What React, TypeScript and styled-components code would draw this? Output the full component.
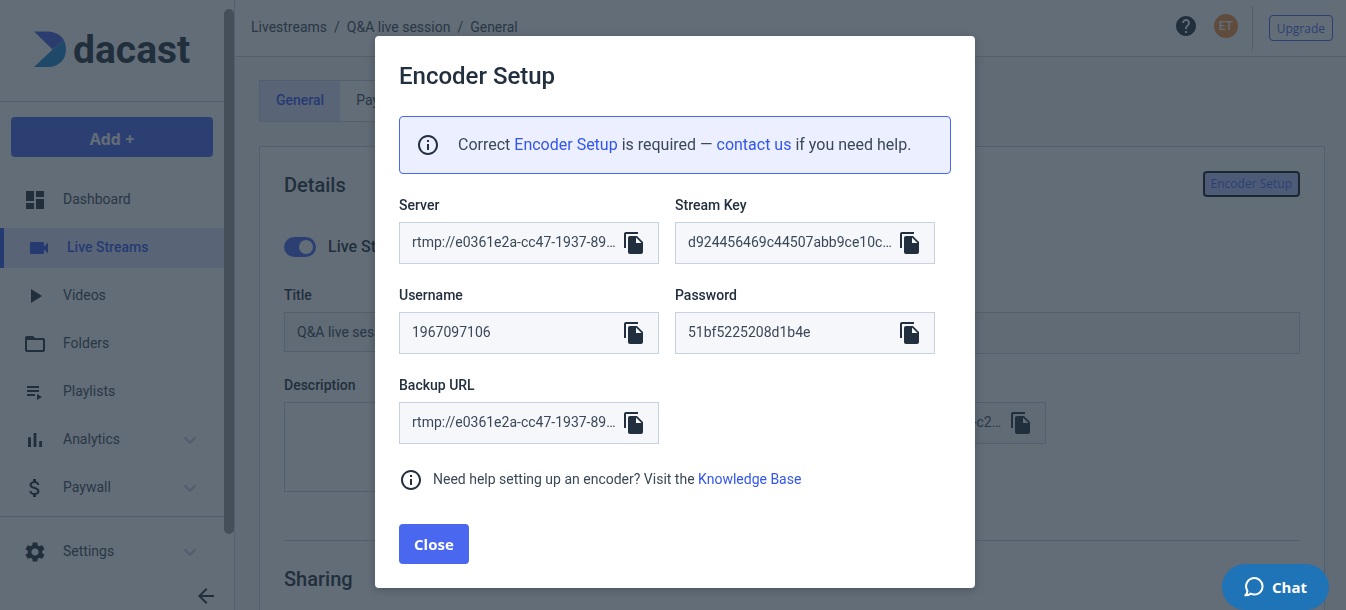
import React from 'react';
import styled, { createGlobalStyle, css } from 'styled-components';
import {
  MdArrowBack,
  MdAttachMoney,
  MdDashboard,
  MdFileCopy,
  MdHelp,
  MdInfoOutline,
  MdPlayArrow,
  MdSettings,
  MdVideocam,
} from 'react-icons/md';

const color = {
  ink: '#222f3e',
  text: '#3b4857',
  blue: '#4967ef',
  link: '#3355ee',
  border: '#c8d1e0',
  surface: '#f5f7fa',
  tint: '#dde3ff',
};

const ui = "'Open Sans', 'Noto Sans', sans-serif";

const GlobalStyle = createGlobalStyle`
  *, *::before, *::after { box-sizing: border-box; }
  body {
    margin: 0;
    color: ${color.text};
    background: ${color.surface};
    font: 400 14px/20px Roboto, sans-serif;
  }
  button, input, textarea { font: inherit; color: inherit; }
  button { cursor: pointer; }
  h1, h2, p, ul, ol { margin: 0; padding: 0; }
  ul, ol { list-style: none; }
  a { color: ${color.link}; text-decoration: none; }
  svg { display: block; flex: none; }
`;

const Page = styled.div`
  display: flex;
  height: 100vh;
  overflow: hidden;
`;

/* Sidebar */

const Sidebar = styled.aside`
  display: flex;
  flex: none;
  width: 235px;
  background: #fff;
  border-right: 1px solid ${color.border};
`;

const SidebarBody = styled.div`
  display: flex;
  flex: 1;
  flex-direction: column;
`;

const ScrollTrack = styled.div`
  width: 10px;
  padding-top: 9px;
`;

const ScrollThumb = styled.div`
  height: 525px;
  border-radius: 5px;
  background: #999;
`;

const Brand = styled.a`
  display: flex;
  align-items: center;
  gap: 7px;
  height: 102px;
  padding: 0 0 2px 34px;
  border-bottom: 1px solid ${color.border};
`;

const BrandName = styled.span`
  color: ${color.ink};
  font: 700 39px/40px Roboto, sans-serif;
`;

const AddButton = styled.button`
  height: 40px;
  margin: 15px 11px 23px;
  padding: 3px 0 0;
  border: 0;
  border-radius: 4px;
  background: ${color.blue};
  color: #fff;
  font: 700 16px/24px ${ui};
`;

const NavList = styled.ul`
  display: flex;
  flex-direction: column;
  gap: 8px;
`;

const NavLink = styled.a<{ $active?: boolean }>`
  display: flex;
  align-items: center;
  gap: 16px;
  height: 40px;
  padding: 0 22px 0 23px;
  color: ${color.text};

  span {
    flex: 1;
    padding-bottom: 2px;
  }
  svg {
    color: ${color.ink};
  }
  svg:last-child:not(:first-child) {
    color: ${color.border};
  }
  ${(p) =>
    p.$active &&
    css`
      border-left: 4px solid ${color.link};
      background: ${color.tint};
      &,
      svg {
        color: ${color.link};
      }
      span {
        font-weight: 500;
      }
    `}
`;

const NavDivider = styled.hr`
  width: 100%;
  margin: 8px 0 15px;
  border: 0;
  border-top: 1px solid ${color.border};
`;

const CollapseButton = styled.button`
  align-self: flex-end;
  margin: 12px 6px 0;
  padding: 0;
  border: 0;
  background: none;
  color: ${color.ink};
`;

/* Main column */

const Main = styled.main`
  display: flex;
  flex: 1;
  flex-direction: column;
  min-width: 0;
`;

const TopBar = styled.header`
  display: flex;
  flex: none;
  align-items: center;
  justify-content: space-between;
  height: 57px;
  padding: 0 13px 0 16px;
  background: #fff;
  border-bottom: 1px solid ${color.border};
`;

const Crumbs = styled.ol`
  display: flex;
  padding-bottom: 2px;

  li + li::before {
    content: '/';
    padding: 0 7px;
  }
  a {
    color: inherit;
  }
`;

const Account = styled.div`
  display: flex;
  align-items: center;
  gap: 14px;
`;

const AccountIcons = styled.div`
  display: flex;
  align-items: center;
  gap: 16px;
  padding-bottom: 4px;
`;

const IconButton = styled.button`
  display: flex;
  padding: 0;
  border: 0;
  background: none;
  color: ${color.ink};
`;

const Avatar = styled.button`
  width: 24px;
  height: 24px;
  padding: 0;
  border: 0;
  border-radius: 50%;
  background: #f0913a;
  color: #fff;
  font: 500 12px/24px Roboto, sans-serif;
`;

const AccountAction = styled.div`
  display: flex;
  align-items: center;
  height: 45px;
  padding-left: 16px;
  border-left: 1px solid ${color.border};
`;

const SmallButton = styled.button<{ $focused?: boolean }>`
  height: 26px;
  padding: 1px 7px 0;
  border: 1px solid ${color.blue};
  border-radius: 4px;
  background: #fff;
  color: ${color.blue};
  font: 400 12px/22px ${ui};
  ${(p) =>
    p.$focused &&
    css`
      padding: 0 6px;
      border: 2px solid #101820;
      background: #b6c2ff;
    `}
`;

const Content = styled.div`
  display: flex;
  flex: 1;
  flex-direction: column;
  gap: 24px;
  padding: 23px 21px 0 24px;
`;

const Tabs = styled.nav`
  display: flex;
  align-self: flex-start;
  border: 1px solid ${color.border};
  background: #fff;
`;

const Tab = styled.a<{ $active?: boolean }>`
  padding: 9px 16px 11px;
  color: ${(p) => (p.$active ? color.link : color.text)};
  background: ${(p) => (p.$active ? color.tint : 'transparent')};
  font-weight: ${(p) => (p.$active ? 500 : 400)};
`;

const Panel = styled.section`
  flex: 1;
  padding: 24px 24px 0;
  border: 1px solid ${color.border};
  border-bottom: 0;
  background: #fff;
`;

const PanelHead = styled.div`
  display: flex;
  align-items: flex-start;
  justify-content: space-between;
`;

const SectionTitle = styled.h2`
  color: ${color.ink};
  font-size: 20px;
  font-weight: 500;
  line-height: 28px;
`;

const SwitchLabel = styled.label`
  display: flex;
  align-items: center;
  gap: 12px;
  height: 20px;
  margin: 38px 0 28px;
  color: ${color.ink};
  font-size: 16px;
  font-weight: 500;
`;

const Switch = styled.input`
  display: flex;
  appearance: none;
  width: 32px;
  height: 20px;
  margin: 0;
  padding: 3px;
  border-radius: 10px;
  background: ${color.blue};

  &::after {
    content: '';
    width: 14px;
    height: 14px;
    margin-left: auto;
    border-radius: 50%;
    background: #fff;
  }
`;

const FormGrid = styled.div`
  display: grid;
  grid-template-columns: 1fr 1fr;
  gap: 21px 24px;
  align-items: start;
`;

const HalfGrid = styled.div`
  display: grid;
  grid-template-columns: 1fr 1fr;
  gap: 12px;
`;

const FieldGroup = styled.div`
  display: flex;
  flex-direction: column;
  gap: 7px;
`;

const FieldLabel = styled.label`
  color: ${color.ink};
  font-weight: 500;
  line-height: 20px;
`;

const TextInput = styled.input`
  width: 100%;
  height: 40px;
  padding: 0 12px;
  border: 1px solid ${color.border};
  border-radius: 0;
  background: ${color.surface};
`;

const FolderInput = styled(TextInput)`
  height: 42px;
`;

const TextArea = styled.textarea`
  height: 90px;
  padding: 8px 12px;
  border: 1px solid ${color.border};
  background: #fff;
  resize: none;
`;

const SectionDivider = styled.hr`
  margin: 48px 0 24px;
  border: 0;
  border-top: 1px solid ${color.border};
`;

const CopyBox = styled.div`
  display: flex;
  align-items: center;
  height: 42px;
  padding: 0 12px;
  border: 1px solid ${color.border};
  background: ${color.surface};
`;

const CopyValue = styled.input`
  flex: 1;
  min-width: 0;
  padding: 0 0 2px;
  border: 0;
  background: none;
  outline: 0;
  text-overflow: ellipsis;
`;

/* Dialog */

const Backdrop = styled.div`
  position: fixed;
  inset: 0;
  display: flex;
  align-items: flex-start;
  justify-content: center;
  padding: 36px 0 0 4px;
  background: rgba(33, 47, 61, 0.7);
`;

const Dialog = styled.div`
  width: 600px;
  max-width: 100%;
  padding: 24px;
  border-radius: 4px;
  background: #fff;
  box-shadow: 0 2px 8px rgba(20, 30, 45, 0.3);
`;

const DialogTitle = styled.h1`
  margin-bottom: 24px;
  color: ${color.ink};
  font-size: 24px;
  font-weight: 500;
  line-height: 32px;
`;

const Notice = styled.div`
  display: flex;
  align-items: center;
  gap: 18px;
  height: 58px;
  padding: 0 16px;
  border: 1px solid ${color.blue};
  border-radius: 4px;
  background: #ebefff;
  font-size: 16px;

  svg {
    color: ${color.ink};
  }
`;

const DialogFields = styled.div`
  display: grid;
  grid-template-columns: 1fr 1fr;
  gap: 21px 16px;
  margin: 21px 16px 24px 0;
`;

const Help = styled.div`
  display: flex;
  align-items: center;
  gap: 10px;

  svg {
    color: ${color.ink};
  }
  p {
    padding-bottom: 2px;
  }
`;

const CloseButton = styled.button`
  height: 40px;
  margin-top: 32px;
  padding: 0 15px;
  border: 0;
  border-radius: 4px;
  background: ${color.blue};
  color: #fff;
  font: 700 15px/24px ${ui};
`;

const ChatButton = styled.button`
  position: fixed;
  right: 17px;
  bottom: 0;
  display: flex;
  align-items: center;
  gap: 8px;
  height: 46px;
  padding: 0 22px;
  border: 0;
  border-radius: 23px;
  background: #1f73b7;
  color: #fff;
  font: 700 15px/20px ${ui};
`;

const BrandMark = () => (
  <svg width="32" height="37" viewBox="0 0 32 37" aria-hidden="true">
    <path d="M0 .5H14C21 .5 27 4 30 9.500L18.500 18.500Z" fill="#4560e0" />
    <path d="M0 36L18.500 18.500L30 9.500C31.300 12 32 15 32 18.500C32 28.500 25 36 14 36Z" fill="#1f88d0" />
  </svg>
);

const PlaylistIcon = () => (
  <svg width="24" height="24" viewBox="0 0 24 24" fill="currentColor" aria-hidden="true">
    <path d="M4 10h12v2H4zM4 6h12v2H4zM4 14h8v2H4zM14 14v6l5-3z" />
  </svg>
);

const BarsIcon = () => (
  <svg width="24" height="24" viewBox="0 0 24 24" fill="currentColor" aria-hidden="true">
    <path d="M5 9.200h3V19H5zM10.600 5h2.800v14h-2.800zM16.200 13H19v6h-2.800z" />
  </svg>
);

const FolderIcon = () => (
  <svg width="24" height="24" viewBox="0 0 24 24" fill="currentColor" aria-hidden="true">
    <path d="M20 6h-8l-2-2H4c-1.100 0-2 .9-2 2v12c0 1.100.9 2 2 2h16c1.100 0 2-.9 2-2V8c0-1.100-.9-2-2-2zm0 12H4V8h16v10z" />
  </svg>
);

const ChevronIcon = () => (
  <svg width="24" height="24" viewBox="0 0 24 24" fill="none" stroke="currentColor" strokeWidth="2.500" strokeLinecap="round" aria-hidden="true">
    <path d="M7.200 10L12 14.800L16.800 10" />
  </svg>
);

const ChatIcon = () => (
  <svg width="20" height="20" viewBox="0 0 20 20" fill="none" stroke="#fff" strokeWidth="2" strokeLinejoin="round" aria-hidden="true">
    <path d="M3.400 13.700A8.200 8.200 0 1 1 6.600 16.600C5 17.900 3.200 18.500 1.300 18.300C2.800 17.200 3.500 15.700 3.400 13.700Z" />
  </svg>
);

type NavItemProps = { icon: React.ReactNode; label: string; active?: boolean; expandable?: boolean };

const NavItem = ({ icon, label, active, expandable }: NavItemProps) => (
  <li>
    <NavLink href="#" $active={active} aria-current={active ? 'page' : undefined}>
      {icon}
      <span>{label}</span>
      {expandable && <ChevronIcon />}
    </NavLink>
  </li>
);

const CopyField = ({ id, label, value }: { id: string; label: string; value: string }) => (
  <FieldGroup>
    <FieldLabel htmlFor={id}>{label}</FieldLabel>
    <CopyBox>
      <CopyValue id={id} value={value} readOnly />
      <IconButton type="button" aria-label={`Copy ${label}`}>
        <MdFileCopy size={24} />
      </IconButton>
    </CopyBox>
  </FieldGroup>
);

export default function App() {
  return (
    <>
      <GlobalStyle />
      <Page>
        <Sidebar>
          <SidebarBody>
            <Brand href="#">
              <BrandMark />
              <BrandName>dacast</BrandName>
            </Brand>
            <AddButton type="button">Add +</AddButton>
            <nav>
              <NavList>
                <NavItem icon={<MdDashboard size={24} />} label="Dashboard" />
                <NavItem icon={<MdVideocam size={24} />} label="Live Streams" active />
                <NavItem icon={<MdPlayArrow size={24} />} label="Videos" />
                <NavItem icon={<FolderIcon />} label="Folders" />
                <NavItem icon={<PlaylistIcon />} label="Playlists" />
                <NavItem icon={<BarsIcon />} label="Analytics" expandable />
                <NavItem icon={<MdAttachMoney size={24} />} label="Paywall" expandable />
              </NavList>
              <NavDivider />
              <NavList>
                <NavItem icon={<MdSettings size={24} />} label="Settings" expandable />
              </NavList>
            </nav>
            <CollapseButton type="button" aria-label="Collapse menu">
              <MdArrowBack size={24} />
            </CollapseButton>
          </SidebarBody>
          <ScrollTrack>
            <ScrollThumb />
          </ScrollTrack>
        </Sidebar>

        <Main>
          <TopBar>
            <Crumbs>
              <li><a href="#">Livestreams</a></li>
              <li><a href="#">Q&amp;A live session</a></li>
              <li>General</li>
            </Crumbs>
            <Account>
              <AccountIcons>
                <IconButton type="button" aria-label="Help">
                  <MdHelp size={24} />
                </IconButton>
                <Avatar type="button">ET</Avatar>
              </AccountIcons>
              <AccountAction>
                <SmallButton type="button">Upgrade</SmallButton>
              </AccountAction>
            </Account>
          </TopBar>

          <Content>
            <Tabs>
              <Tab href="#" $active>General</Tab>
              <Tab href="#">Paywall</Tab>
            </Tabs>
            <Panel>
              <PanelHead>
                <SectionTitle>Details</SectionTitle>
                <SmallButton type="button" $focused>Encoder Setup</SmallButton>
              </PanelHead>
              <SwitchLabel>
                <Switch type="checkbox" role="switch" defaultChecked />
                Live Stream Online
              </SwitchLabel>
              <FormGrid>
                <FieldGroup>
                  <FieldLabel htmlFor="title">Title</FieldLabel>
                  <TextInput id="title" defaultValue="Q&A live session" />
                </FieldGroup>
                <FieldGroup>
                  <FieldLabel htmlFor="folders">Folders</FieldLabel>
                  <FolderInput id="folders" />
                </FieldGroup>
                <FieldGroup>
                  <FieldLabel htmlFor="description">Description</FieldLabel>
                  <TextArea id="description" />
                </FieldGroup>
                <HalfGrid>
                  <CopyField id="content-id" label="Content ID" value="e0361e2a-cc47-1937-8fa-c2…" />
                </HalfGrid>
              </FormGrid>
              <SectionDivider />
              <SectionTitle>Sharing</SectionTitle>
            </Panel>
          </Content>
        </Main>
      </Page>

      <Backdrop>
        <Dialog role="dialog" aria-modal="true" aria-labelledby="dialog-title">
          <DialogTitle id="dialog-title">Encoder Setup</DialogTitle>
          <Notice>
            <MdInfoOutline size={24} />
            <p>
              Correct <a href="#">Encoder Setup</a> is required — <a href="#">contact us</a> if you need help.
            </p>
          </Notice>
          <DialogFields>
            <CopyField id="server" label="Server" value="rtmp://e0361e2a-cc47-1937-89…" />
            <CopyField id="stream-key" label="Stream Key" value="d924456469c44507abb9ce10c…" />
            <CopyField id="username" label="Username" value="1967097106" />
            <CopyField id="password" label="Password" value="51bf5225208d1b4e" />
            <CopyField id="backup-url" label="Backup URL" value="rtmp://e0361e2a-cc47-1937-89…" />
          </DialogFields>
          <Help>
            <MdInfoOutline size={24} />
            <p>
              Need help setting up an encoder? Visit the <a href="#">Knowledge Base</a>
            </p>
          </Help>
          <CloseButton type="button">Close</CloseButton>
        </Dialog>
      </Backdrop>

      <ChatButton type="button">
        <ChatIcon />
        Chat
      </ChatButton>
    </>
  );
}
